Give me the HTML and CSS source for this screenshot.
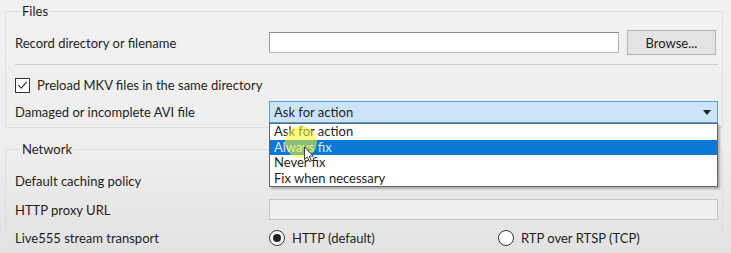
FILE: index.html
```html
<!DOCTYPE html>
<html>
<head>
<meta charset="utf-8">
<link rel="stylesheet" href="styles.css">
</head>
<body>
<div class="page">
  <fieldset class="group files">
    <legend>Files</legend>
    <div class="row first-row">
      <span class="label">Record directory or filename</span>
      <div class="ctrl pathctrl">
        <div class="input"></div>
        <div class="button">Browse...</div>
      </div>
    </div>
    <div class="sep"></div>
    <div class="row check-row">
      <span class="checkbox">
        <svg width="14" height="14" viewBox="0 0 14 14"><path d="M2.5 7.2 L5.6 10.3 L11.6 3.6" fill="none" stroke="#333" stroke-width="1.3"/></svg>
      </span>
      <span class="check-label">Preload MKV files in the same directory</span>
    </div>
    <div class="row combo-row">
      <span class="label">Damaged or incomplete AVI file</span>
      <div class="ctrl combo-wrap">
        <div class="combo">
          <span>Ask for action</span>
          <svg class="arrow" width="8" height="5" viewBox="0 0 8 5"><path d="M0 0 H8 L4 5 Z" fill="#222"/></svg>
        </div>
        <ul class="list">
          <li>Ask for action</li>
          <li class="sel">Always fix</li>
          <li>Never fix</li>
          <li>Fix when necessary</li>
        </ul>
        <div class="halo"></div>
        <svg class="cursor" width="11" height="17" viewBox="0 0 13 19"><path d="M0.5 0.5 V15.5 L4 12.2 L6.6 18 L8.8 17 L6.3 11.4 H11 Z" fill="#fff" stroke="#111" stroke-width="1" stroke-linejoin="round"/></svg>
      </div>
    </div>
  </fieldset>
  <fieldset class="group network">
    <legend>Network</legend>
    <div class="row nrow">
      <span class="label">Default caching policy</span>
      <div class="ctrl"></div>
    </div>
    <div class="row nrow">
      <span class="label">HTTP proxy URL</span>
      <div class="ctrl"><div class="input disabled"></div></div>
    </div>
    <div class="row nrow">
      <span class="label">Live555 stream transport</span>
      <div class="ctrl radios">
        <span class="radio on"><span class="dot"></span></span><span class="rlabel first">HTTP (default)</span>
        <span class="radio"></span><span class="rlabel">RTP over RTSP (TCP)</span>
      </div>
    </div>
  </fieldset>
</div>
</body>
</html>
```
FILE: styles.css
```css
html, body {
  margin: 0;
  padding: 0;
}
body {
  width: 731px;
  height: 253px;
  overflow: hidden;
  background: linear-gradient(180deg, #f1f1f1 0%, #eeeeee 60%, #e2e2e2 100%);
  font-family: Lato, "Noto Sans", sans-serif;
  font-size: 13px;
  color: #1e1e1e;
}
.page {
  padding: 0 8px 0 5px;
}
.group {
  border: 1px solid #dedede;
  margin: 0;
  padding: 0 4px 0 9px;
}
.group legend {
  padding: 0 2px;
  margin-left: 5px;
  line-height: 16px;
  height: 16px;
}
.files {
  margin-top: 3px;
  padding-top: 11px;
  padding-bottom: 0;
  height: 112px;
}
.network {
  margin-top: 13px;
  padding-top: 10px;
  border-bottom: none;
  height: 82px;
}
.row {
  display: flex;
  align-items: center;
}
.label {
  width: 254px;
  flex: none;
}
.ctrl {
  flex: 1;
  display: flex;
  align-items: center;
  position: relative;
}
.first-row {
  height: 25px;
}
.pathctrl {
  gap: 8px;
}
.input {
  flex: 1;
  height: 19px;
  background: #fff;
  border: 1px solid #7f7f7f;
  border-color: #8a8a8a #b5b5b5 #b5b5b5 #9a9a9a;
}
.input.disabled {
  background: #efefef;
  border: 1px solid #c4c4c4;
}
.button {
  width: 89px;
  height: 25px;
  box-sizing: border-box;
  background: #e3e3e3;
  border: 1px solid #b3b3b3;
  display: flex;
  align-items: center;
  justify-content: center;
  margin-right: 2px;
}
.sep {
  height: 1px;
  background: #cfcfcf;
  margin: 9px 0 9px 0;
}
.check-row {
  height: 22px;
}
.checkbox {
  width: 13px;
  height: 13px;
  border: 1px solid #333;
  background: #fff;
  display: flex;
  align-items: center;
  justify-content: center;
  margin-right: 7px;
}
.checkbox svg {
  display: block;
}
.combo-row {
  height: 22px;
  margin-top: 5px;
}
.combo {
  flex: 1;
  height: 20px;
  box-sizing: content-box;
  background: #cce4f7;
  border: 1px solid #5a9ede;
  display: flex;
  align-items: center;
  justify-content: space-between;
  padding: 0 6px 0 4px;
}
.arrow {
  display: block;
}
.list {
  position: absolute;
  left: 0;
  right: 0;
  top: 22px;
  margin: 0;
  padding: 0;
  list-style: none;
  background: #fff;
  border: 1px solid #646464;
  box-shadow: 2px 2px 2px rgba(0,0,0,0.28);
  z-index: 2;
}
.list li {
  height: 15.5px;
  line-height: 15px;
  padding-left: 4px;
}
.list li.sel {
  background: #0a78d4;
  color: #d8ecff;
}
.halo {
  position: absolute;
  left: 16px;
  top: 25px;
  width: 32px;
  height: 32px;
  border-radius: 50%;
  background: rgba(250, 245, 40, 0.55);
  z-index: 3;
}
.cursor {
  position: absolute;
  left: 35px;
  top: 45px;
  z-index: 4;
}
.nrow {
  height: 28.5px;
}
.radio {
  width: 14px;
  height: 14px;
  border: 1px solid #333;
  border-radius: 50%;
  background: #fff;
  display: flex;
  align-items: center;
  justify-content: center;
  flex: none;
}
.radio .dot {
  width: 8px;
  height: 8px;
  border-radius: 50%;
  background: #222;
}
.rlabel {
  margin-left: 7px;
}
.rlabel.first {
  width: 206px;
}
```
